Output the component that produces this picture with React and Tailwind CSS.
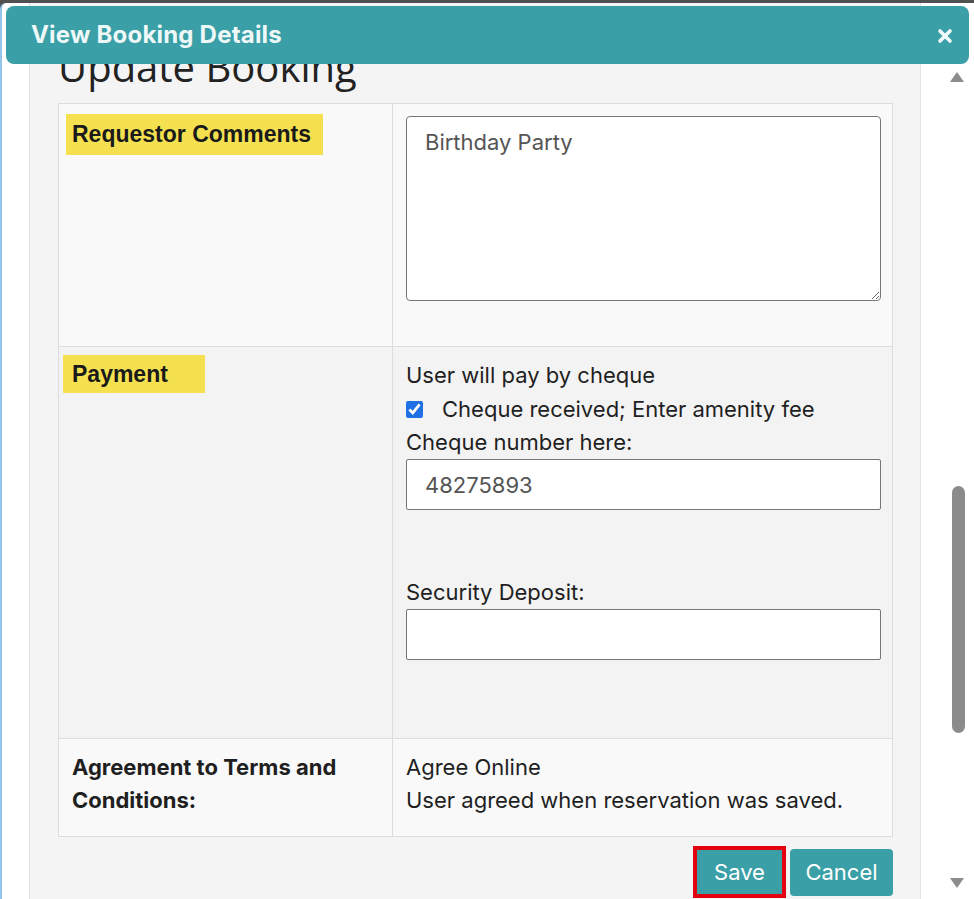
import React from "react";

const TEAL = "bg-[#3a9fa6]";

const App = () => {
  return (
    <div className="relative h-[899px] w-[974px] overflow-hidden bg-[#505050] pt-[3px] font-['Inter',sans-serif] text-[#1f1f1f]">
      <div className="relative flex h-[900px] rounded-t-[6px] border-l-2 border-[#93c5ea] bg-white">
        {/* modal header, sits over the scrolled content */}
        <div className={`absolute left-[4px] right-[5px] top-[3px] z-10 flex h-[58px] items-center justify-between rounded-[8px] ${TEAL} pl-[25px] pr-[16px]`}>
          <h2 className="text-[24px] font-bold tracking-[0.2px] text-[#eef8f8]">
            View Booking Details
          </h2>
          <svg width="16" height="16" viewBox="0 0 16 16" className="mt-[2px]">
            <path d="M3 3 L13 13 M13 3 L3 13" stroke="#f2fbfb" strokeWidth="3.6" strokeLinecap="round" />
          </svg>
        </div>

        <div className="w-[27px] shrink-0" />

        {/* scrolled panel */}
        <div className="w-[892px] shrink-0 border-x border-[#e4e4e4] bg-[#f4f4f4] pl-[28px] pt-[40px]">
          <h1 className="h-[48px] font-['Open_Sans',sans-serif] text-[40px] leading-[48px] text-[#222]">
            Update Booking
          </h1>

          <div className="mt-[12px] w-[835px] border border-[#dcdcdc] text-[22px] leading-[33px]">
            {/* row 1 */}
            <div className="flex border-b border-[#dcdcdc] bg-[#f9f9f9]">
              <div className="w-[334px] shrink-0 border-r border-[#dcdcdc] pl-[7px] pt-[10px]">
                <div className="flex h-[41px] w-[257px] items-center bg-[#f5e14f] pl-[6px] font-['Liberation_Sans',sans-serif] text-[23px] font-bold text-[#1a1a1a]">
                  Requestor Comments
                </div>
              </div>
              <div className="flex-1 px-[13px] pb-[45px] pt-[12px]">
                <textarea
                  defaultValue="Birthday Party"
                  className="block h-[185px] w-[475px] rounded-[4px] border border-[#767676] bg-white px-[18px] py-[10px] text-[22px] leading-[30px] text-[#555]"
                />
              </div>
            </div>

            {/* row 2 */}
            <div className="flex border-b border-[#dcdcdc] bg-[#f3f3f3]">
              <div className="w-[334px] shrink-0 border-r border-[#dcdcdc] pl-[4px] pt-[8px]">
                <div className="flex h-[38px] w-[142px] items-center bg-[#f5e14f] pl-[9px] font-['Liberation_Sans',sans-serif] text-[23px] font-bold text-[#1a1a1a]">
                  Payment
                </div>
              </div>
              <div className="flex-1 px-[13px] pb-[78px] pt-[12px]">
                <p>User will pay by cheque</p>
                <label className="flex h-[34px] items-center">
                  <input
                    type="checkbox"
                    defaultChecked
                    className="m-0 h-[17px] w-[17px] accent-[#1f6fe5]"
                  />
                  <span className="ml-[19px]">Cheque received; Enter amenity fee</span>
                </label>
                <p>Cheque number here:</p>
                <input
                  defaultValue="48275893"
                  className="block h-[51px] w-[475px] rounded-[2px] border border-[#767676] bg-white px-[18px] text-[22px] text-[#555]"
                />
                <p className="mt-[66px]">Security Deposit:</p>
                <input className="block h-[51px] w-[475px] rounded-[2px] border border-[#767676] bg-white px-[18px] text-[22px]" />
              </div>
            </div>

            {/* row 3 */}
            <div className="flex bg-[#f9f9f9]">
              <div className="w-[334px] shrink-0 border-r border-[#dcdcdc] px-[13px] pb-[19px] pt-[12px] font-bold">
                Agreement to Terms and Conditions:
              </div>
              <div className="flex-1 px-[13px] pt-[12px]">
                <p>Agree Online</p>
                <p>User agreed when reservation was saved.</p>
              </div>
            </div>
          </div>

          <div className="flex w-[835px] items-center justify-end gap-[4px] pt-[9px]">
            <button className="h-[52px] w-[93px] border-4 border-[#e3000f] bg-[#3a9fa6] text-[22px] text-white">
              Save
            </button>
            <button className={`h-[47px] w-[103px] rounded-[4px] ${TEAL} text-[22px] text-white`}>
              Cancel
            </button>
          </div>
        </div>

        {/* scrollbar */}
        <div className="flex flex-1 flex-col bg-white pl-[29px] pt-[69px]">
          <svg width="14" height="10" viewBox="0 0 14 10">
            <path d="M7 0 L14 10 L0 10 Z" fill="#8c8c8c" />
          </svg>
          <div className="ml-[2px] mt-[404px] h-[247px] w-[13px] rounded-full bg-[#8b8b8b]" />
          <svg width="14" height="10" viewBox="0 0 14 10" className="mt-[145px]">
            <path d="M0 0 L14 0 L7 10 Z" fill="#8c8c8c" />
          </svg>
        </div>
      </div>
    </div>
  );
};

export default App;
